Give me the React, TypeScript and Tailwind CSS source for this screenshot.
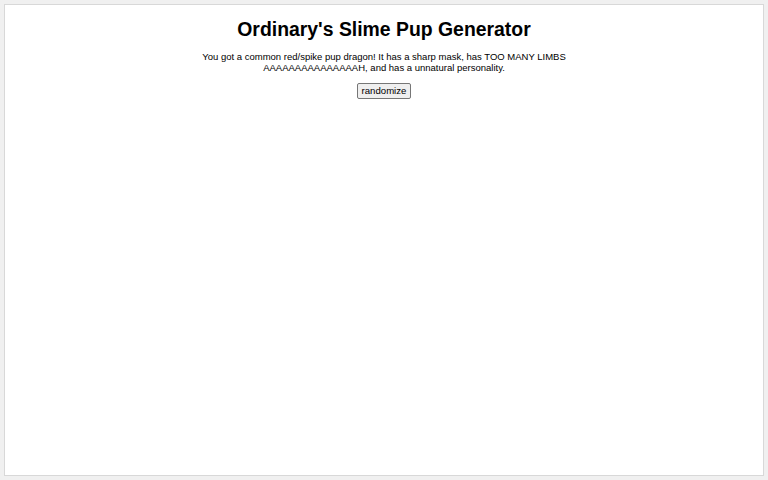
export default function App() {
  return (
    <div className="h-[480px] w-[768px] bg-[#f0f0f0] p-[4px]" style={{ fontFamily: '"Liberation Sans", Arial, sans-serif' }}>
      <div className="flex h-full flex-col items-center border border-[#d8d8d8] bg-white text-black">
        <h1 className="mt-[13px] text-[19.4px] font-bold leading-[22px]">Ordinary's Slime Pup Generator</h1>
        <p className="mt-[11px] w-[380px] text-center text-[9.5px] leading-[11px]">
          You got a common red/spike pup dragon! It has a sharp mask, has TOO MANY LIMBS AAAAAAAAAAAAAAAH, and has a unnatural personality.
        </p>
        <button className="mt-[10px] rounded-[2px] border border-[#767676] bg-[#efefef] px-[4px] py-[1px] text-[9.6px] leading-[12px]">
          randomize
        </button>
      </div>
    </div>
  );
}
